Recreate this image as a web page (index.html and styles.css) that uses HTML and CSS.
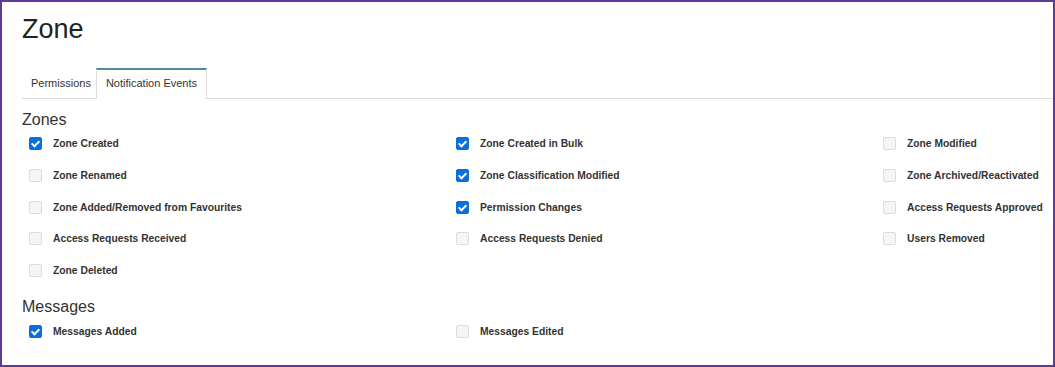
FILE: index.html
```html
<!DOCTYPE html>
<html lang="en">
<head>
    <meta charset="UTF-8">
    <title>Zone</title>
    <link rel="stylesheet" href="styles.css">
</head>
<body>
    <div class="frame">
        <h1 class="title">Zone</h1>

        <div class="tabs">
            <div class="tab">Permissions</div>
            <div class="tab active">Notification Events</div>
        </div>

        <h2 class="group-title">Zones</h2>
        <div class="events">
            <label class="event"><span class="box checked"></span>Zone Created</label>
            <label class="event"><span class="box checked"></span>Zone Created in Bulk</label>
            <label class="event"><span class="box"></span>Zone Modified</label>

            <label class="event"><span class="box"></span>Zone Renamed</label>
            <label class="event"><span class="box checked"></span>Zone Classification Modified</label>
            <label class="event"><span class="box"></span>Zone Archived/Reactivated</label>

            <label class="event"><span class="box"></span>Zone Added/Removed from Favourites</label>
            <label class="event"><span class="box checked"></span>Permission Changes</label>
            <label class="event"><span class="box"></span>Access Requests Approved</label>

            <label class="event"><span class="box"></span>Access Requests Received</label>
            <label class="event"><span class="box"></span>Access Requests Denied</label>
            <label class="event"><span class="box"></span>Users Removed</label>

            <label class="event"><span class="box"></span>Zone Deleted</label>
        </div>

        <h2 class="group-title messages">Messages</h2>
        <div class="events">
            <label class="event"><span class="box checked"></span>Messages Added</label>
            <label class="event"><span class="box"></span>Messages Edited</label>
        </div>
    </div>
</body>
</html>
```

FILE: styles.css
```css
body {
    margin: 0;
    padding: 0;
    font-family: "Liberation Sans", Arial, sans-serif;
    background-color: #ffffff;
    color: #333333;
}

.frame {
    box-sizing: border-box;
    width: 1055px;
    height: 367px;
    border: 2px solid #5b3a9c;
    padding: 0 0 0 20px;
    overflow: hidden;
}

.title {
    margin: 0;
    padding-top: 10px;
    font-size: 27px;
    font-weight: normal;
    line-height: 34px;
    color: #222222;
}

.tabs {
    display: flex;
    margin-top: 22px;
    border-bottom: 1px solid #dddddd;
}

.tab {
    height: 28px;
    line-height: 27px;
    padding: 0 4px 0 8px;
    font-size: 11px;
    color: #333333;
    border: 1px solid transparent;
    border-bottom: none;
    border-top: 2px solid transparent;
}

.tab.active {
    padding: 0 9px;
    background-color: #ffffff;
    border-color: #dddddd;
    border-top-color: #4d8c9c;
    margin-bottom: -1px;
    height: 29px;
}

.group-title {
    margin: 12px 0 0 0;
    font-size: 16px;
    font-weight: normal;
    line-height: 18px;
    color: #333333;
}

.group-title.messages {
    margin-top: 12px;
}

.events {
    display: grid;
    grid-template-columns: 427px 427px 1fr;
    grid-auto-rows: 31.7px;
    padding-left: 7px;
    margin-top: -1px;
}

.event {
    display: flex;
    align-items: center;
    gap: 11px;
    font-size: 10.3px;
    font-weight: bold;
    color: #333333;
    white-space: nowrap;
}

.box {
    box-sizing: border-box;
    width: 13px;
    height: 13px;
    border-radius: 2px;
    border: 1px solid #dcdcdc;
    background-color: #f5f5f5;
    flex-shrink: 0;
    position: relative;
}

.box.checked {
    background-color: #0b6ede;
    border-color: #0b6ede;
}

.box.checked::after {
    content: "";
    position: absolute;
    left: 3px;
    top: 1px;
    width: 3px;
    height: 6px;
    border: solid #ffffff;
    border-width: 0 2px 2px 0;
    transform: rotate(45deg);
}
```
